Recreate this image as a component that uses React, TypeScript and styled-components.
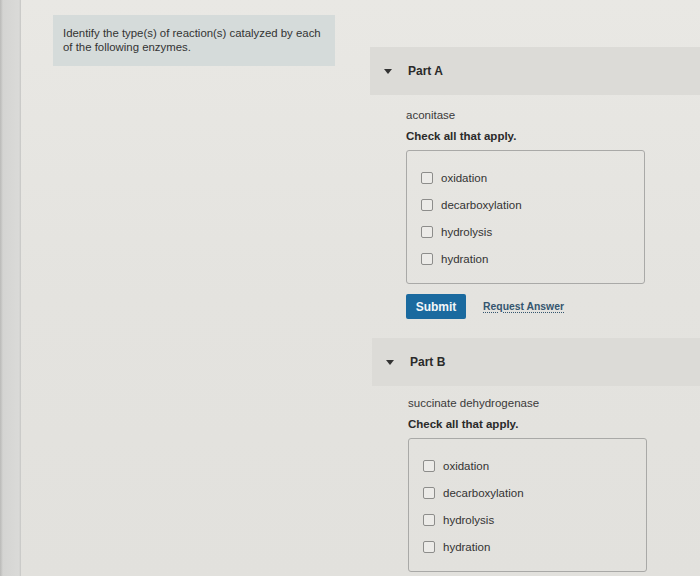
import styled, { createGlobalStyle } from "styled-components";

const Global = createGlobalStyle`
  html, body { margin: 0; padding: 0; }
  body {
    width: 700px;
    height: 576px;
    overflow: hidden;
    background: linear-gradient(180deg, #e9e8e4 0px, #e4e3df 300px, #e2e1dd 576px);
    font-family: "Liberation Sans", Arial, sans-serif;
    color: #2b2b2b;
  }
`;

const Page = styled.div`
  display: flex;
  height: 576px;
`;

const Edge = styled.div`
  width: 21px;
  flex-shrink: 0;
  background: linear-gradient(90deg, #b9b9b7 0px, #d4d4d2 3px, #dadad8 19px, #c6c6c4 21px);
`;

const LeftCol = styled.div`
  width: 282px;
  padding: 15px 0 0 32px;
  flex-shrink: 0;
`;

const Intro = styled.div`
  background: #d5dbda;
  padding: 11px 10px 12px 10px;
  font-size: 11.4px;
  line-height: 14px;
  color: #333;
`;

const RightCol = styled.div`
  flex: 1;
  padding: 47px 0 0 35px;
`;

const Part = styled.section<{ $shift?: number }>`
  margin-left: ${(p) => p.$shift ?? 0}px;
  margin-bottom: 19px;
`;

const Header = styled.div`
  display: flex;
  align-items: center;
  height: 48px;
  background: #dcdbd7;
  padding-left: 14px;
  font-size: 12px;
  font-weight: bold;
  color: #2a2a2a;
`;

const Caret = styled.span`
  width: 0;
  height: 0;
  border-left: 4px solid transparent;
  border-right: 4px solid transparent;
  border-top: 5px solid #333;
  margin-right: 16px;
`;

const Body = styled.div<{ $top: number }>`
  padding: ${(p) => p.$top}px 0 0 36px;
`;

const Enzyme = styled.div`
  font-size: 11.5px;
  color: #3a3a3a;
  margin-bottom: 9px;
`;

const Instr = styled.div`
  font-size: 11.5px;
  font-weight: bold;
  color: #2a2a2a;
  margin-bottom: 8px;
`;

const Choices = styled.div`
  box-sizing: border-box;
  width: 239px;
  border: 1px solid #a9a9a7;
  border-radius: 3px;
  padding: 20px 0 17px 14px;
  display: flex;
  flex-direction: column;
  gap: 13px;
`;

const Choice = styled.label`
  display: flex;
  align-items: center;
  font-size: 11.5px;
  color: #333;
  height: 14px;
`;

const Box = styled.span`
  width: 10px;
  height: 10px;
  border: 1px solid #8d8d8b;
  border-radius: 2px;
  background: #ecebe8;
  margin-right: 8px;
`;

const Actions = styled.div`
  display: flex;
  align-items: center;
  gap: 17px;
  margin-top: 10px;
`;

const Submit = styled.button`
  width: 60px;
  height: 25px;
  border: none;
  border-radius: 2px;
  background: #1a6a9f;
  color: #f2f6f8;
  font-family: "Liberation Sans", Arial, sans-serif;
  font-size: 12px;
  font-weight: bold;
  padding: 0;
`;

const Request = styled.a`
  font-size: 10.4px;
  font-weight: bold;
  color: #35566f;
  text-decoration: underline dotted;
  text-underline-offset: 2px;
`;

const options = ["oxidation", "decarboxylation", "hydrolysis", "hydration"];

function Question({
  label,
  enzyme,
  shift,
  top,
  actions,
}: {
  label: string;
  enzyme: string;
  shift?: number;
  top: number;
  actions?: boolean;
}) {
  return (
    <Part $shift={shift}>
      <Header>
        <Caret />
        {label}
      </Header>
      <Body $top={top}>
        <Enzyme>{enzyme}</Enzyme>
        <Instr>Check all that apply.</Instr>
        <Choices>
          {options.map((o) => (
            <Choice key={o}>
              <Box />
              {o}
            </Choice>
          ))}
        </Choices>
        {actions && (
          <Actions>
            <Submit>Submit</Submit>
            <Request>Request Answer</Request>
          </Actions>
        )}
      </Body>
    </Part>
  );
}

export default function App() {
  return (
    <>
      <Global />
      <Page>
        <Edge />
        <LeftCol>
          <Intro>
            Identify the type(s) of reaction(s) catalyzed by each
            <br />
            of the following enzymes.
          </Intro>
        </LeftCol>
        <RightCol>
          <Question label="Part A" enzyme="aconitase" top={14} actions />
          <Question label="Part B" enzyme="succinate dehydrogenase" shift={2} top={11} />
        </RightCol>
      </Page>
    </>
  );
}
